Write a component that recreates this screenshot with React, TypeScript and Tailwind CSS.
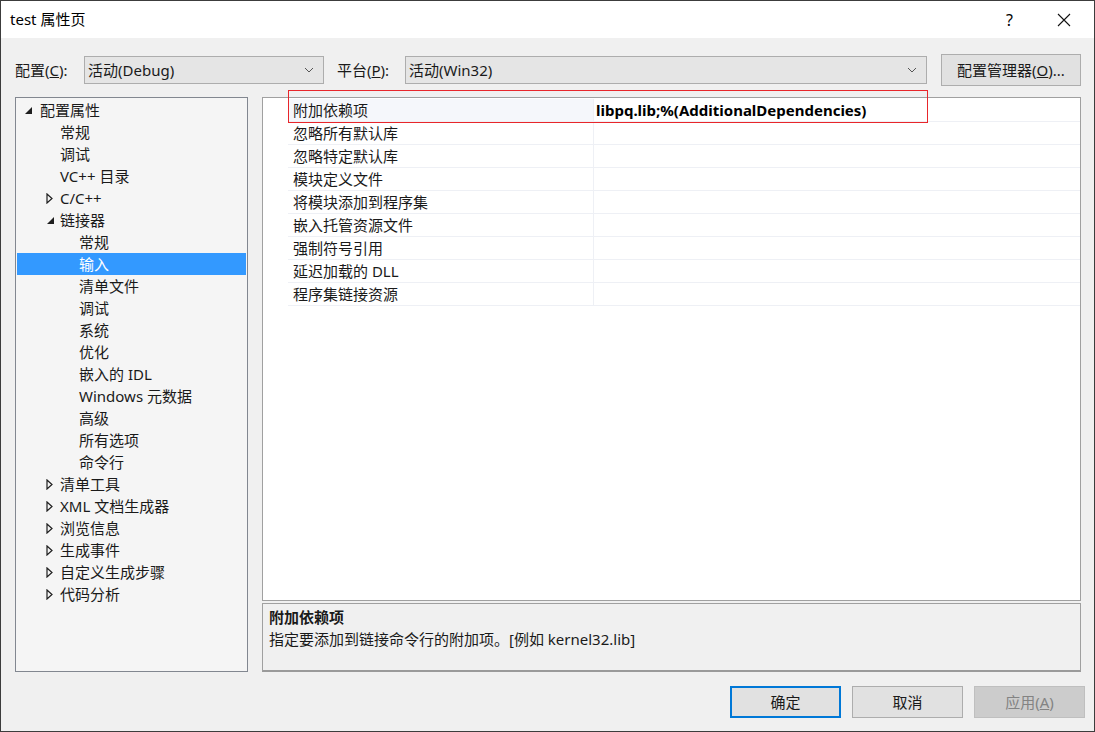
import React from "react"

const font = { fontFamily: '"Noto Sans", "Noto Sans CJK SC", sans-serif' }

type Node = { label: string; level: number; arrow?: "open" | "closed"; selected?: boolean }

const tree: Node[] = [
  { label: "配置属性", level: 0, arrow: "open" },
  { label: "常规", level: 1 },
  { label: "调试", level: 1 },
  { label: "VC++ 目录", level: 1 },
  { label: "C/C++", level: 1, arrow: "closed" },
  { label: "链接器", level: 1, arrow: "open" },
  { label: "常规", level: 2 },
  { label: "输入", level: 2, selected: true },
  { label: "清单文件", level: 2 },
  { label: "调试", level: 2 },
  { label: "系统", level: 2 },
  { label: "优化", level: 2 },
  { label: "嵌入的 IDL", level: 2 },
  { label: "Windows 元数据", level: 2 },
  { label: "高级", level: 2 },
  { label: "所有选项", level: 2 },
  { label: "命令行", level: 2 },
  { label: "清单工具", level: 1, arrow: "closed" },
  { label: "XML 文档生成器", level: 1, arrow: "closed" },
  { label: "浏览信息", level: 1, arrow: "closed" },
  { label: "生成事件", level: 1, arrow: "closed" },
  { label: "自定义生成步骤", level: 1, arrow: "closed" },
  { label: "代码分析", level: 1, arrow: "closed" },
]

const props = [
  "附加依赖项",
  "忽略所有默认库",
  "忽略特定默认库",
  "模块定义文件",
  "将模块添加到程序集",
  "嵌入托管资源文件",
  "强制符号引用",
  "延迟加载的 DLL",
  "程序集链接资源",
]

function Arrow({ kind, selected }: { kind: "open" | "closed"; selected?: boolean }) {
  const c = selected ? "#fff" : "#1e1e1e"
  if (kind === "open")
    return (
      <svg width="9" height="9" viewBox="0 0 9 9">
        <polygon points="8,1 8,8 1,8" fill={c} />
      </svg>
    )
  return (
    <svg width="7" height="11" viewBox="0 0 7 11">
      <polygon points="1,1 6,5.5 1,10" fill="none" stroke={c} strokeWidth="1.2" />
    </svg>
  )
}

function Chevron() {
  return (
    <svg width="10" height="6" viewBox="0 0 10 6" className="mr-[9px]">
      <polyline points="1,1 5,5 9,1" fill="none" stroke="#555" strokeWidth="1" />
    </svg>
  )
}

function Dropdown({ value, width }: { value: string; width: string }) {
  return (
    <div className={`${width} h-[28px] flex items-center justify-between bg-[#e5e5e5] border border-[#adadad] pl-[3px] text-[15px] text-[#1a1a1a]`}>
      <span>{value}</span>
      <Chevron />
    </div>
  )
}

function Button({ children, primary, disabled }: { children: React.ReactNode; primary?: boolean; disabled?: boolean }) {
  const cls = primary
    ? "border-2 border-[#0078d7] bg-[#e1e1e1] text-[#1a1a1a]"
    : disabled
      ? "border border-[#bfbfbf] bg-[#cccccc] text-[#838383]"
      : "border border-[#adadad] bg-[#e1e1e1] text-[#1a1a1a]"
  return <div className={`w-[111px] h-[32px] flex items-center justify-center text-[15px] ${cls}`}>{children}</div>
}

export default function App() {
  return (
    <div style={font} className="w-[1095px] h-[732px] border border-[#3c3c3c] bg-[#f0f0f0] flex flex-col overflow-hidden relative">
      <div className="h-[37px] bg-white flex items-center justify-between pl-[9px] text-[15px] text-black shrink-0">
        <span>test 属性页</span>
        <div className="flex items-center">
          <span className="text-[16px] mr-[44px]">?</span>
          <svg width="14" height="14" viewBox="0 0 14 14" className="mr-[23px]">
            <path d="M1 1 L13 13 M13 1 L1 13" stroke="#111" strokeWidth="1.1" />
          </svg>
        </div>
      </div>

      <div className="flex items-center h-[32px] mt-[16px] pl-[14px] pr-[13px] text-[15px] text-[#1a1a1a]">
        <span className="w-[69px]">
          配置(<span className="underline">C</span>):
        </span>
        <Dropdown value="活动(Debug)" width="w-[240px]" />
        <span className="ml-[13px] w-[68px]">
          平台(<span className="underline">P</span>):
        </span>
        <Dropdown value="活动(Win32)" width="w-[522px]" />
        <div className="ml-[14px] w-[140px] h-[32px] flex items-center justify-center bg-[#e1e1e1] border border-[#adadad]">
          配置管理器(<span className="underline">O</span>)...
        </div>
      </div>

      <div className="flex mt-[11px] pl-[14px] pr-[13px] h-[575px]">
        <div className="w-[233px] h-full border border-[#828790] bg-[#f5f5f5] p-px text-[15px] text-[#1a1a1a]">
          {tree.map((n, i) => (
            <div
              key={i}
              className={`h-[22px] flex items-center ${n.selected ? "bg-[#3399ff] text-white" : ""}`}
            >
              <div
                className={`flex items-center shrink-0 ${
                  n.level === 0 ? "w-[16px] ml-[7px]" : n.level === 1 ? "w-[14px] ml-[29px]" : "w-0 ml-[62px]"
                }`}
              >
                {n.arrow && <Arrow kind={n.arrow} selected={n.selected} />}
              </div>
              <span className="whitespace-nowrap">{n.label}</span>
            </div>
          ))}
        </div>

        <div className="ml-[14px] flex-1 flex flex-col">
          <div className="h-[505px] border border-[#a0a0a0] bg-white pt-px text-[15px] text-[#1a1a1a]">
            {props.map((p, i) => (
              <div key={i} className="h-[23px] flex">
                <div className="w-[25px] shrink-0" />
                <div
                  className={`w-[305px] shrink-0 flex items-center pl-[5px] border-b border-[#eef0f5] ${
                    i === 0 ? "bg-[#f5f7fb]" : ""
                  }`}
                >
                  {p}
                </div>
                <div className="flex-1 flex items-center pl-[2px] border-b border-l border-[#eef0f5] font-bold text-black">
                  {i === 0 ? "libpq.lib;%(AdditionalDependencies)" : ""}
                </div>
              </div>
            ))}
          </div>
          <div className="mt-[2px] h-[69px] border border-[#a0a0a0] border-b-2 border-b-[#9a9a9a] bg-[#f0f0f0] px-[6px] pt-[2px] text-[15px] text-[#1a1a1a]">
            <div className="h-[22px] flex items-center font-bold">附加依赖项</div>
            <div className="h-[22px] flex items-center">指定要添加到链接命令行的附加项。[例如 kernel32.lib]</div>
          </div>
        </div>
      </div>

      <div className="flex justify-end gap-[11px] mt-[14px] pr-[9px]">
        <Button primary>确定</Button>
        <Button>取消</Button>
        <Button disabled>
          应用(<span className="underline">A</span>)
        </Button>
      </div>

      <div className="absolute left-[287px] top-[89px] w-[640px] h-[33px] border border-[#e8262b] pointer-events-none" />
    </div>
  )
}
